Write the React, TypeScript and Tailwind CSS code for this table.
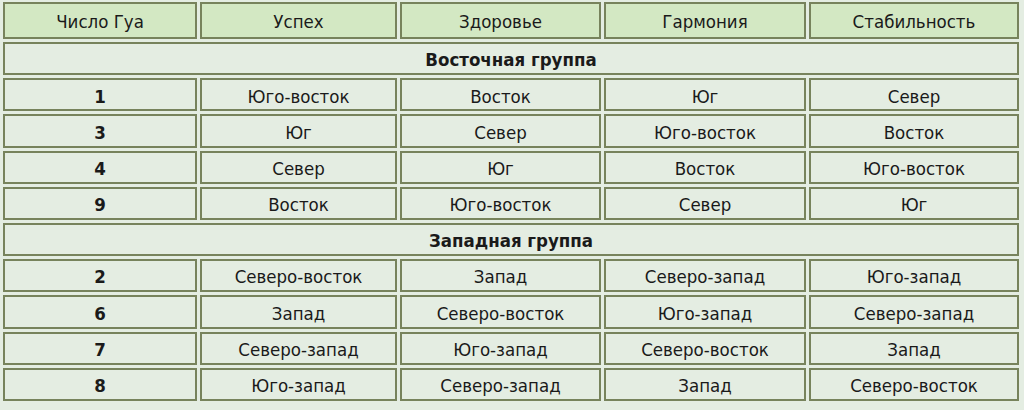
import React from 'react';

const head = ['Число Гуа', 'Успех', 'Здоровье', 'Гармония', 'Стабильность'];

type Row = [string, string, string, string, string];

const east: Row[] = [
  ['1', 'Юго-восток', 'Восток', 'Юг', 'Север'],
  ['3', 'Юг', 'Север', 'Юго-восток', 'Восток'],
  ['4', 'Север', 'Юг', 'Восток', 'Юго-восток'],
  ['9', 'Восток', 'Юго-восток', 'Север', 'Юг'],
];

const west: Row[] = [
  ['2', 'Северо-восток', 'Запад', 'Северо-запад', 'Юго-запад'],
  ['6', 'Запад', 'Северо-восток', 'Юго-запад', 'Северо-запад'],
  ['7', 'Северо-запад', 'Юго-запад', 'Северо-восток', 'Запад'],
  ['8', 'Юго-запад', 'Северо-запад', 'Запад', 'Северо-восток'],
];

const cell = 'h-[33.2px] border-2 border-[#77835c] text-center align-middle px-0 pt-[4px] pb-0 leading-none';

function Group({ title, rows }: { title: string; rows: Row[] }) {
  return (
    <>
      <tr>
        <td colSpan={5} className={`${cell} font-bold`}>
          {title}
        </td>
      </tr>
      {rows.map((r) => (
        <tr key={r[0]}>
          {r.map((v, i) => (
            <td key={i} className={`${cell} ${i === 0 ? 'font-bold' : ''}`}>
              {v}
            </td>
          ))}
        </tr>
      ))}
    </>
  );
}

export default function App() {
  return (
    <div className="w-[1024px] h-[410px] bg-[#e4ede2] text-[#1a1a1a] text-[18.5px] font-['DejaVu_Sans_Condensed','DejaVu_Sans',sans-serif] overflow-hidden">
      <table className="w-[1022px] table-fixed border-separate border-spacing-[3px] -mt-px">
        <colgroup>
          <col className="w-[194px]" />
          <col className="w-[197px]" />
          <col className="w-[201px]" />
          <col className="w-[202px]" />
          <col className="w-[210px]" />
        </colgroup>
        <thead>
          <tr>
            {head.map((h) => (
              <th key={h} className={`${cell} !h-[37px] font-normal bg-[#d3e8c3]`}>
                {h}
              </th>
            ))}
          </tr>
        </thead>
        <tbody>
          <Group title="Восточная группа" rows={east} />
          <Group title="Западная группа" rows={west} />
        </tbody>
      </table>
    </div>
  );
}
